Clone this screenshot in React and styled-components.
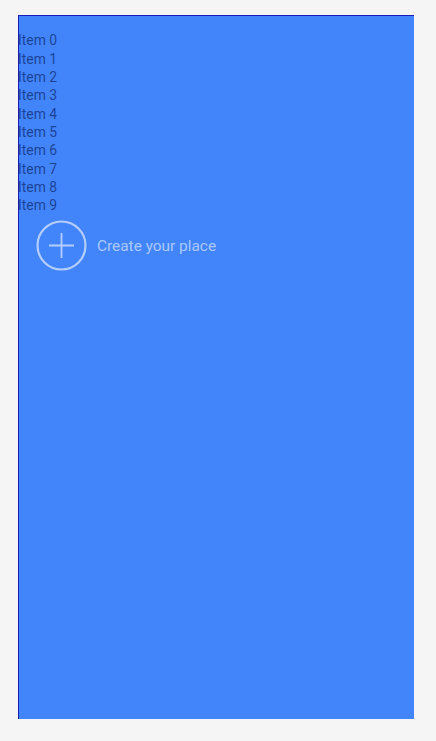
import React from "react";
import styled, { createGlobalStyle } from "styled-components";

const Global = createGlobalStyle`
  html, body { margin: 0; padding: 0; background: #f5f5f5; }
  body { font-family: Roboto, "Liberation Sans", sans-serif; }
`;

const Page = styled.div`
  box-sizing: border-box;
  width: 436px;
  height: 741px;
  padding: 15px 22px 22px 18px;
  background: #f5f5f5;
`;

const Panel = styled.main`
  box-sizing: border-box;
  height: 704px;
  padding-top: 15.25px;
  background: #4285fa;
  border-top: 1px solid #1a1ab8;
  border-left: 1px solid #1a1ab8;
`;

const List = styled.ul`
  margin: 0 0 0 -1px;
  padding: 0;
  list-style: none;
`;

const Item = styled.li`
  font-size: 13.9px;
  line-height: 18.33px;
  color: rgba(13, 40, 110, 0.72);
`;

const CreateRow = styled.div`
  display: flex;
  align-items: center;
  gap: 10px;
  margin: 5.45px 0 0 17px;
  color: rgba(255, 255, 255, 0.56);
`;

const Label = styled.span`
  padding-top: 2px;
  font-size: 15.4px;
  line-height: 20px;
`;

const PlusIcon = () => (
  <svg width="51" height="51" viewBox="0 0 51 51" fill="none" stroke="rgba(255,255,255,0.6)">
    <circle cx="25.5" cy="25.5" r="24" strokeWidth="2.2" />
    <path d="M13 25.5H38M25.5 13V38" strokeWidth="1.8" />
  </svg>
);

export default function App() {
  return (
    <Page>
      <Global />
      <Panel>
        <List>
          {Array.from({ length: 10 }, (_, i) => (
            <Item key={i}>Item {i}</Item>
          ))}
        </List>
        <CreateRow>
          <PlusIcon />
          <Label>Create your place</Label>
        </CreateRow>
      </Panel>
    </Page>
  );
}
